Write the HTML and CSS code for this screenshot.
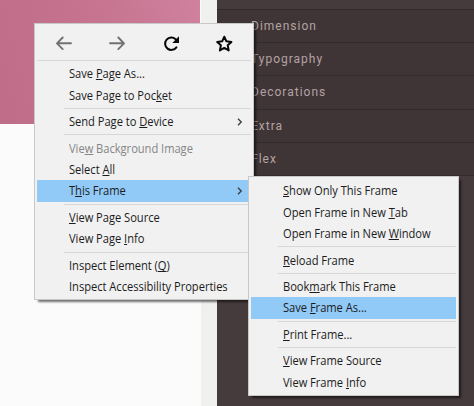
FILE: index.html
```html
<!DOCTYPE html>
<html lang="en">
<head>
<meta charset="utf-8">
<title>Frame context menu</title>
<link rel="stylesheet" href="styles.css">
</head>
<body>
<div class="page">
  <main class="canvas"><div class="hero"></div></main>
  <div class="gutter"></div>
  <aside class="sidebar">
    <div class="sector">Dimension</div>
    <div class="sector">Typography</div>
    <div class="sector">Decorations</div>
    <div class="sector">Extra</div>
    <div class="sector">Flex</div>
    <div class="rest"></div>
  </aside>
</div>

<nav class="menu main-menu">
  <div class="toolbar">
    <svg class="icon muted" viewBox="0 0 18 18"><path d="M16 8.3H2.2M7.7 2.5 2 8.3l5.7 5.8"/></svg>
    <svg class="icon muted" viewBox="0 0 18 18"><path d="M2 8.3H15.8M10.3 2.5l5.7 5.8-5.7 5.8"/></svg>
    <svg class="icon" viewBox="0 0 18 18"><path d="M14.4 12.3A6.2 6.2 0 1 1 13.6 4.2L15 6"/><path class="solid" d="M17 1.3v6.7h-6.7z"/></svg>
    <svg class="icon" viewBox="0 0 18 18"><path d="m9.3 1.7 2.1 4.6 5 .6-3.7 3.4 1 5.1-4.4-2.5-4.4 2.5 1-5.1L2.2 6.900l5-.6z"/></svg>
  </div>
  <div class="item"><span>Save <u>P</u>age As...</span></div>
  <div class="item"><span>Save Page to Poc<u>k</u>et</span></div>
  <div class="separator"></div>
  <div class="item"><span>Send Page to <u>D</u>evice</span><svg class="chevron" viewBox="0 0 6 8"><path d="m1 .8 3.2 3.2L1 7.2"/></svg></div>
  <div class="separator"></div>
  <div class="item disabled"><span>Vie<u>w</u> Background Image</span></div>
  <div class="item"><span>Select <u>A</u>ll</span></div>
  <div class="item active"><span>T<u>h</u>is Frame</span><svg class="chevron" viewBox="0 0 6 8"><path d="m1 .8 3.2 3.2L1 7.2"/></svg></div>
  <div class="separator"></div>
  <div class="item"><span><u>V</u>iew Page Source</span></div>
  <div class="item"><span>View Page <u>I</u>nfo</span></div>
  <div class="separator"></div>
  <div class="item"><span>Inspect Element (<u>Q</u>)</span></div>
  <div class="item"><span>Inspect Accessibility Properties</span></div>
</nav>

<nav class="menu sub-menu">
  <div class="item"><span><u>S</u>how Only This Frame</span></div>
  <div class="item"><span>Open Frame in New <u>T</u>ab</span></div>
  <div class="item"><span>Open Frame in New <u>W</u>indow</span></div>
  <div class="separator"></div>
  <div class="item"><span><u>R</u>eload Frame</span></div>
  <div class="separator"></div>
  <div class="item"><span>Book<u>m</u>ark This Frame</span></div>
  <div class="item active"><span>Save <u>F</u>rame As...</span></div>
  <div class="separator"></div>
  <div class="item"><span><u>P</u>rint Frame...</span></div>
  <div class="separator"></div>
  <div class="item"><span><u>V</u>iew Frame Source</span></div>
  <div class="item"><span>View Frame <u>I</u>nfo</span></div>
</nav>
</body>
</html>
```
FILE: styles.css
```css
* { box-sizing: border-box; }
body { margin: 0; overflow: hidden; background: #fbfbfb; }
.page { display: flex; width: 474px; height: 406px; }
.canvas { width: 201px; background: #fbfbfb; }
.hero { width: 200px; height: 124px; background: linear-gradient(75deg, #be6d88, #c5738e 50%, #cf819d); }
.gutter { width: 16px; background: #f0f0ef; }
.sidebar {
  flex: 1; display: flex; flex-direction: column; padding-top: 9px;
  background: #463b3c; color: #b3a3a5;
  font: 12px/32px Roboto, "Liberation Sans", sans-serif; letter-spacing: 1px;
}
.sector { height: 33.2px; padding: 0 0 0 34px; border-top: 1px solid #322a2c; background: #403536; }
.rest { flex: 1; border-top: 1px solid #322a2c; }

.menu {
  position: absolute; padding: 3px 2px; border: 1px solid #c8c8c8; background: #f1f1f1;
  color: #1c1c1c; font: 500 12px/21px "Open Sans", "Noto Sans", sans-serif; letter-spacing: -0.04px;
  box-shadow: 3px 3px 2px -1px rgba(0, 0, 0, .55);
}
.main-menu { left: 34px; top: 23px; width: 220px; height: 277px; }
.sub-menu { left: 248px; top: 176px; width: 211px; height: 220px; }
.toolbar {
  display: flex; justify-content: space-around; align-items: center;
  height: 34px; margin-bottom: 2px; border-bottom: 1px solid #d7d7d7;
}
.icon { width: 18px; height: 18px; fill: none; stroke: #080808; stroke-width: 2; stroke-linejoin: round; stroke-linecap: round; }
.icon.muted { stroke: #717171; stroke-width: 1.9; }
.icon .solid { fill: #080808; stroke: none; }
.item { display: flex; align-items: center; justify-content: space-between; height: 21.45px; padding: 0 8px 0 31.5px; white-space: nowrap; }
.item span { transform: scaleX(.93); transform-origin: left; }
.item u { text-decoration-thickness: 1px; text-underline-offset: 1px; text-decoration-skip-ink: none; }
.item.active { background: #91c9f7; }
.item.disabled { color: #858585; }
.separator { height: 5px; margin-left: 27px; padding-top: 2px; }
.separator::before { content: ""; display: block; height: 1px; background: #d7d7d7; }
.chevron { width: 6px; height: 8px; fill: none; stroke: #404040; stroke-width: 1.4; }
```
